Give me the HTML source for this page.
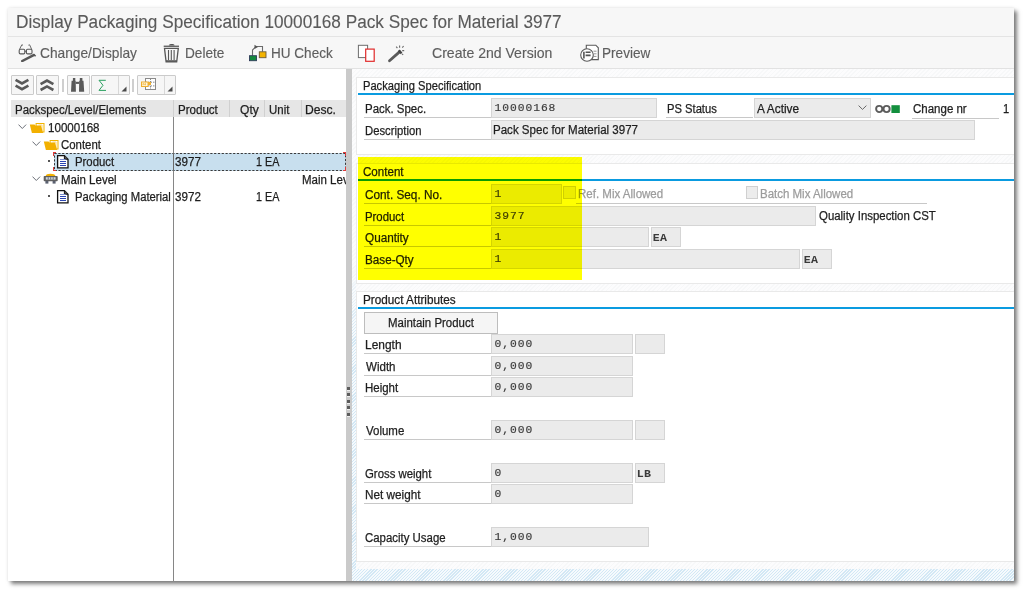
<!DOCTYPE html>
<html><head><meta charset="utf-8">
<style>
*{box-sizing:border-box}
html,body{margin:0;padding:0}
body{width:1023px;height:590px;background:#fff;position:relative;overflow:hidden;font-family:"Liberation Sans",sans-serif;color:#222}
.a{position:absolute;white-space:nowrap}
.r{position:absolute}
.hatch{position:absolute;background-color:#eef6fb;background-image:repeating-linear-gradient(135deg,#d3e8f5 0 1px,#f6fafd 1px 2.2px)}
.fhatch{position:absolute;background-color:#fbfbfc;background-image:repeating-linear-gradient(135deg,#f7f8f9 0 1.2px,#fcfcfd 1.2px 3px)}
</style></head><body>

<div class="r" style="left:8px;top:8px;width:1006px;height:573px;background:#fff;box-shadow:3px 3px 4px 0px rgba(0,0,0,0.5),0 0 3px rgba(0,0,0,0.10)"></div>
<div class="r" style="left:8px;top:8px;width:1006px;height:28px;background:#f7f7f7;"></div>
<div class="r" style="left:8px;top:36px;width:1006px;height:1px;background:#e4e4e4;"></div>
<div class="a" style="left:15.62px;top:10px;font-size:18px;line-height:25px;color:#5a5a5a;font-family:'Liberation Sans',sans-serif;font-weight:400;transform:scaleX(0.9550);transform-origin:0 0;-webkit-text-stroke:0.12px #5a5a5a;">Display Packaging Specification 10000168 Pack Spec for Material 3977</div>
<div class="r" style="left:8px;top:37px;width:1006px;height:31px;background:#f7f7f7;"></div>
<div class="r" style="left:8px;top:68px;width:1006px;height:1px;background:#e2e2e2;"></div>
<div class="a" style="left:40.31px;top:43px;font-size:14.5px;line-height:20px;color:#5e5e5e;font-family:'Liberation Sans',sans-serif;font-weight:400;transform:scaleX(0.9474);transform-origin:0 0;-webkit-text-stroke:0.15px #5e5e5e;">Change/Display</div>
<div class="a" style="left:184.91px;top:43px;font-size:14.5px;line-height:20px;color:#5e5e5e;font-family:'Liberation Sans',sans-serif;font-weight:400;transform:scaleX(0.9403);transform-origin:0 0;-webkit-text-stroke:0.15px #5e5e5e;">Delete</div>
<div class="a" style="left:270.92px;top:43px;font-size:14.5px;line-height:20px;color:#5e5e5e;font-family:'Liberation Sans',sans-serif;font-weight:400;transform:scaleX(0.9339);transform-origin:0 0;-webkit-text-stroke:0.15px #5e5e5e;">HU Check</div>
<div class="a" style="left:432.3px;top:43px;font-size:14.5px;line-height:20px;color:#5e5e5e;font-family:'Liberation Sans',sans-serif;font-weight:400;transform:scaleX(0.9702);transform-origin:0 0;-webkit-text-stroke:0.15px #5e5e5e;">Create 2nd Version</div>
<div class="a" style="left:601.61px;top:43px;font-size:14.5px;line-height:20px;color:#5e5e5e;font-family:'Liberation Sans',sans-serif;font-weight:400;transform:scaleX(0.9374);transform-origin:0 0;-webkit-text-stroke:0.15px #5e5e5e;">Preview</div>
<svg class="a" style="left:16px;top:42px" width="22" height="20" viewBox="0 0 22 20"><rect x="3.2" y="7.3" width="5.6" height="4.6" rx="1.2" fill="none" stroke="#575757" stroke-width="1.1"/><rect x="10.4" y="7.3" width="5.6" height="4.6" rx="1.2" fill="none" stroke="#575757" stroke-width="1.1"/><path d="M8.8 9.3 h1.6 M3.6 7.2 L5.8 2.8 L7 3.2 M15.6 7.2 L13.6 2.8 L12.4 3.2" fill="none" stroke="#575757" stroke-width="0.9"/><path d="M6.2 19 L17.6 13.1" stroke="#575757" stroke-width="2.5" stroke-linecap="round"/><path d="M17.6 12.2 L19.6 14.2" stroke="#575757" stroke-width="1.6"/></svg>
<svg class="a" style="left:162px;top:42px" width="19" height="21" viewBox="0 0 19 21"><path d="M6.8 3.6 Q6.8 2 8.8 2 h2 Q12.6 2 12.6 3.6" fill="#575757"/><rect x="1.7" y="3.6" width="15.3" height="1.3" fill="#575757"/><path d="M2.5 6.3 h13.8 l-1.6 13.5 h-10.6 Z" fill="none" stroke="#575757" stroke-width="1.3"/><path d="M6.5 8 v10 M9.3 8 v10 M12.1 8 v10" stroke="#575757" stroke-width="1.1"/><rect x="4" y="18.2" width="10.8" height="1.7" fill="#575757"/></svg>
<svg class="a" style="left:248px;top:44px" width="20" height="18" viewBox="0 0 20 18"><path d="M4.5 11.7 V6 L8 2.5 H14.5 V7.8" fill="none" stroke="#6b6b6b" stroke-width="1.1"/><path d="M6.5 0.8 L10 3 L6.5 5 Z" fill="#555"/><rect x="1.5" y="11.7" width="7" height="5" fill="#14893d" stroke="#2f3a5a" stroke-width="0.9"/><rect x="11.3" y="7.8" width="6.7" height="5.9" fill="#f3b300" stroke="#6a5a3a" stroke-width="0.9"/></svg>
<svg class="a" style="left:356px;top:44px" width="20" height="19" viewBox="0 0 20 19"><rect x="2.4" y="1.3" width="9.2" height="12.3" fill="#fff" stroke="#6d6d6d" stroke-width="1"/><rect x="9.7" y="5.1" width="8.5" height="12.2" fill="#fff" stroke="#e02a2a" stroke-width="1.2"/></svg>
<svg class="a" style="left:386px;top:43px" width="21" height="20" viewBox="0 0 21 20"><path d="M3.5 17.8 L13.8 8.6" stroke="#5a5a5a" stroke-width="2.8" stroke-linecap="round"/><path d="M12.6 7.4 L15.6 10.4" stroke="#444" stroke-width="2.2"/><path d="M13.6 2.6 v2.2 M10.2 3.6 l1.2 1.6 M17.6 3 l-1.3 1.6 M18.2 7.6 h-2 M17.2 11.8 l-1.2 -1" stroke="#6a6a6a" stroke-width="1.1"/></svg>
<svg class="a" style="left:578px;top:43px" width="22" height="20" viewBox="0 0 22 20"><path d="M8.3 2.2 h9.5 l2.5 2.6 v11.8 h-12 Z" fill="#fff" stroke="#5a5a5a" stroke-width="1.1"/><path d="M15.5 8.2 h3 M15.5 10.8 h3 M15.5 13.4 h3" stroke="#8a8a8a" stroke-width="0.9"/><circle cx="9" cy="12" r="6.3" fill="#fff" stroke="#5a5a5a" stroke-width="1.1"/><path d="M5.9 8.7 v6.8 M7.6 9.3 h5 M7.6 12.4 h5" stroke="#555" stroke-width="1.6"/></svg>
<div class="r" style="left:8px;top:69px;width:338px;height:512px;background:#fff;"></div>
<div class="r" style="left:11px;top:75px;width:23px;height:20px;background:#f6f6f6;border:1px solid #cbcbcb;border-radius:1px"></div>
<div class="r" style="left:36px;top:75px;width:23px;height:20px;background:#f6f6f6;border:1px solid #cbcbcb;border-radius:1px"></div>
<div class="r" style="left:62px;top:79px;width:2px;height:13px;background:#cfcfcf;"></div>
<div class="r" style="left:67px;top:75px;width:23px;height:20px;background:#f6f6f6;border:1px solid #cbcbcb;border-radius:1px"></div>
<div class="r" style="left:91px;top:75px;width:39px;height:20px;background:#f6f6f6;border:1px solid #cbcbcb;border-radius:1px"></div>
<div class="r" style="left:118px;top:76px;width:1px;height:18px;background:#d8d8d8;"></div>
<svg class="a" style="left:121px;top:86px" width="6" height="6" viewBox="0 0 6 6"><path d="M5.5 0.5 L5.5 5.5 L0.5 5.5 Z" fill="#4a4a4a"/></svg>
<div class="r" style="left:132px;top:79px;width:2px;height:13px;background:#cfcfcf;"></div>
<div class="r" style="left:137px;top:75px;width:39px;height:20px;background:#f6f6f6;border:1px solid #cbcbcb;border-radius:1px"></div>
<div class="r" style="left:164px;top:76px;width:1px;height:18px;background:#d8d8d8;"></div>
<svg class="a" style="left:167px;top:86px" width="6" height="6" viewBox="0 0 6 6"><path d="M5.5 0.5 L5.5 5.5 L0.5 5.5 Z" fill="#4a4a4a"/></svg>
<svg class="a" style="left:14px;top:78px" width="16" height="14" viewBox="0 0 16 14"><path d="M1.6 1.8 L8 5.4 L14.4 1.8" fill="none" stroke="#5a5a5a" stroke-width="2.6"/><path d="M1.6 7.6 L8 11.2 L14.4 7.6" fill="none" stroke="#5a5a5a" stroke-width="2.6"/></svg>
<svg class="a" style="left:39px;top:78px" width="16" height="14" viewBox="0 0 16 14"><path d="M1.6 6.2 L8 2.6 L14.4 6.2" fill="none" stroke="#5a5a5a" stroke-width="2.6"/><path d="M1.6 12 L8 8.4 L14.4 12" fill="none" stroke="#5a5a5a" stroke-width="2.6"/></svg>
<svg class="a" style="left:66px;top:74px" width="24" height="22" viewBox="0 0 24 22"><path d="M6.9 3.9 H9.3 V6.7 H9.7 L9.9 17.7 H5 L5.6 6.7 H6.9 Z M13.8 3.9 H16.4 V6.7 H17.5 L18.2 17.7 H13 L13.2 6.7 H13.8 Z" fill="#595959"/><rect x="9.6" y="7.8" width="3.8" height="2.1" fill="#595959"/></svg>
<svg class="a" style="left:97px;top:79px" width="10" height="13" viewBox="0 0 10 13"><path d="M8.8 1.3 H2 L6 6.3 L2 11.4 H9" fill="none" stroke="#2aa060" stroke-width="1.0"/></svg>
<svg class="a" style="left:140px;top:77px" width="20" height="15" viewBox="0 0 20 15"><rect x="5.5" y="1.5" width="10" height="11" fill="#fff" stroke="#8a8a8a" stroke-width="1"/><path d="M5.5 5.2 H15.5 M5.5 8.9 H15.5 M10.5 1.5 V12.5" stroke="#8a8a8a" stroke-width="1" stroke-dasharray="1.5 1"/><rect x="1.5" y="5" width="6.5" height="4.5" fill="#fff7e0" stroke="#f0b030" stroke-width="1"/><rect x="8" y="5" width="3" height="3" fill="#f0b030"/><path d="M3 8.3 V6.4 L4.2 7.5 L5.4 6.4 V8.3" fill="none" stroke="#f0b030" stroke-width="0.8"/></svg>
<div class="r" style="left:11px;top:100px;width:335px;height:17px;background:#e6e6e6;"></div>
<div class="r" style="left:173px;top:100px;width:1px;height:17px;background:#d0d0d0;"></div>
<div class="r" style="left:229px;top:100px;width:1px;height:17px;background:#d0d0d0;"></div>
<div class="r" style="left:264px;top:100px;width:1px;height:17px;background:#d0d0d0;"></div>
<div class="r" style="left:301px;top:100px;width:1px;height:17px;background:#d0d0d0;"></div>
<div class="r" style="left:173px;top:117px;width:1px;height:464px;background:#868686;"></div>
<div class="a" style="left:14.98px;top:102px;font-size:12px;line-height:17px;color:#1e1e1e;font-family:'Liberation Sans',sans-serif;font-weight:400;transform:scaleX(0.9550);transform-origin:0 0;-webkit-text-stroke:0.25px #1e1e1e;">Packspec/Level/Elements</div>
<div class="a" style="left:177.88px;top:102px;font-size:12px;line-height:17px;color:#1e1e1e;font-family:'Liberation Sans',sans-serif;font-weight:400;transform:scaleX(0.9623);transform-origin:0 0;-webkit-text-stroke:0.25px #1e1e1e;">Product</div>
<div class="a" style="left:240.36px;top:102px;font-size:12px;line-height:17px;color:#1e1e1e;font-family:'Liberation Sans',sans-serif;font-weight:400;transform:scaleX(1.0044);transform-origin:0 0;-webkit-text-stroke:0.25px #1e1e1e;">Qty</div>
<div class="a" style="left:269.44px;top:102px;font-size:12px;line-height:17px;color:#1e1e1e;font-family:'Liberation Sans',sans-serif;font-weight:400;transform:scaleX(0.9538);transform-origin:0 0;-webkit-text-stroke:0.25px #1e1e1e;">Unit</div>
<div class="a" style="left:305.43px;top:102px;font-size:12px;line-height:17px;color:#1e1e1e;font-family:'Liberation Sans',sans-serif;font-weight:400;transform:scaleX(1.0098);transform-origin:0 0;-webkit-text-stroke:0.25px #1e1e1e;">Desc.</div>
<div class="r" style="left:54px;top:153px;width:292px;height:18px;background:#c8dfee;"></div>
<svg class="a" style="left:54px;top:153px" width="292" height="18" viewBox="0 0 292 18"><rect x="0.5" y="0.5" width="291" height="17" fill="none" stroke="#3a3a3a" stroke-width="1" stroke-dasharray="2.2 1.6"/></svg>
<div class="r" style="left:53px;top:152px;width:1px;height:4px;background:#e23a3a;"></div>
<div class="r" style="left:53px;top:152px;width:3px;height:1px;background:#e23a3a;"></div>
<div class="r" style="left:53px;top:167px;width:1px;height:4px;background:#e23a3a;"></div>
<div class="r" style="left:53px;top:170px;width:3px;height:1px;background:#e23a3a;"></div>
<div class="r" style="left:345px;top:152px;width:1px;height:4px;background:#e23a3a;"></div>
<div class="r" style="left:343px;top:152px;width:3px;height:1px;background:#e23a3a;"></div>
<div class="r" style="left:345px;top:167px;width:1px;height:4px;background:#e23a3a;"></div>
<div class="r" style="left:343px;top:170px;width:3px;height:1px;background:#e23a3a;"></div>
<div class="r" style="left:173px;top:153px;width:1px;height:18px;background:#6a6a6a;"></div>
<svg class="a" style="left:18px;top:124px" width="9" height="6" viewBox="0 0 9 6"><path d="M0.5 0.6 L4.3 4.5 L8.1 0.6" fill="none" stroke="#6c7078" stroke-width="1"/></svg>
<svg class="a" style="left:29px;top:122px" width="16" height="13" viewBox="0 0 16 13"><rect x="7.1" y="1.5" width="7.9" height="8.5" fill="#fffdf5" stroke="#f2b400" stroke-width="1"/><path d="M9.5 3 h3.5 v6" fill="none" stroke="#f6d27a" stroke-width="0.8"/><path d="M0.8 2.6 H5.6 L6.3 3.4 H12 L14.1 11.1 H2.9 Z" fill="#f2b000"/></svg>
<div class="a" style="left:47.93px;top:120px;font-size:12px;line-height:17px;color:#1e1e1e;font-family:'Liberation Sans',sans-serif;font-weight:400;transform:scaleX(0.9650);transform-origin:0 0;-webkit-text-stroke:0.25px #1e1e1e;">10000168</div>
<svg class="a" style="left:32px;top:141px" width="9" height="6" viewBox="0 0 9 6"><path d="M0.5 0.6 L4.3 4.5 L8.1 0.6" fill="none" stroke="#6c7078" stroke-width="1"/></svg>
<svg class="a" style="left:43px;top:139px" width="16" height="13" viewBox="0 0 16 13"><rect x="7.1" y="1.5" width="7.9" height="8.5" fill="#fffdf5" stroke="#f2b400" stroke-width="1"/><path d="M9.5 3 h3.5 v6" fill="none" stroke="#f6d27a" stroke-width="0.8"/><path d="M0.8 2.6 H5.6 L6.3 3.4 H12 L14.1 11.1 H2.9 Z" fill="#f2b000"/></svg>
<div class="a" style="left:61.43px;top:137px;font-size:12px;line-height:17px;color:#1e1e1e;font-family:'Liberation Sans',sans-serif;font-weight:400;transform:scaleX(0.9507);transform-origin:0 0;-webkit-text-stroke:0.25px #1e1e1e;">Content</div>
<div class="r" style="left:48px;top:160px;width:2px;height:2px;background:#555;box-shadow:0 0 0.6px #888"></div>
<svg class="a" style="left:56px;top:154px" width="14" height="15" viewBox="0 0 14 15"><path d="M1.6 1.6 H8.4 L12 5.2 V13.9 H1.6 Z" fill="#fff" stroke="#111" stroke-width="1.3"/><path d="M8.4 1.6 V5.2 H12" fill="#555" stroke="#111" stroke-width="1"/><path d="M4 5.5 H9.5" stroke="#7c8fd0" stroke-width="1"/><path d="M4 7.5 H10 M4 9.5 H10 M4 11.5 H10" stroke="#2b45b0" stroke-width="1"/></svg>
<div class="a" style="left:74.89px;top:154px;font-size:12px;line-height:17px;color:#1e1e1e;font-family:'Liberation Sans',sans-serif;font-weight:400;transform:scaleX(0.9474);transform-origin:0 0;-webkit-text-stroke:0.25px #1e1e1e;">Product</div>
<div class="a" style="left:175.23px;top:154px;font-size:12px;line-height:17px;color:#1e1e1e;font-family:'Liberation Sans',sans-serif;font-weight:400;transform:scaleX(0.9719);transform-origin:0 0;-webkit-text-stroke:0.25px #1e1e1e;">3977</div>
<div class="a" style="left:256.19px;top:154px;font-size:12px;line-height:17px;color:#1e1e1e;font-family:'Liberation Sans',sans-serif;font-weight:400;transform:scaleX(0.8971);transform-origin:0 0;-webkit-text-stroke:0.25px #1e1e1e;">1 EA</div>
<svg class="a" style="left:32px;top:176px" width="9" height="6" viewBox="0 0 9 6"><path d="M0.5 0.6 L4.3 4.5 L8.1 0.6" fill="none" stroke="#6c7078" stroke-width="1"/></svg>
<svg class="a" style="left:43px;top:173px" width="16" height="12" viewBox="0 0 16 12"><path d="M2.5 3.2 Q3.2 0.8 7.5 0.8 Q11.8 0.8 12.5 3.2 Z" fill="#f2b000"/><rect x="0.7" y="3" width="14" height="5.2" rx="0.8" fill="#5f5f5f"/><rect x="2.8" y="4.2" width="9.8" height="2.4" fill="#cfd8e0"/><path d="M5.2 4.2 v2.4 M7.7 4.2 v2.4 M10.2 4.2 v2.4" stroke="#6a6a6a" stroke-width="0.9"/><rect x="2.4" y="8" width="3" height="2.6" fill="#5a6070"/><rect x="9.6" y="8" width="3" height="2.6" fill="#5a6070"/></svg>
<div class="a" style="left:61.08px;top:172px;font-size:12px;line-height:17px;color:#1e1e1e;font-family:'Liberation Sans',sans-serif;font-weight:400;transform:scaleX(0.9577);transform-origin:0 0;-webkit-text-stroke:0.25px #1e1e1e;">Main Level</div>
<div class="r" style="left:300px;top:170px;width:46px;height:18px;overflow:hidden">
<div class="a" style="left:2.08px;top:2px;font-size:12px;line-height:17px;color:#1e1e1e;font-family:'Liberation Sans',sans-serif;font-weight:400;transform:scaleX(0.9577);transform-origin:0 0;-webkit-text-stroke:0.25px #1e1e1e;">Main Level</div>
</div>
<div class="r" style="left:48px;top:195px;width:2px;height:2px;background:#555;box-shadow:0 0 0.6px #888"></div>
<svg class="a" style="left:56px;top:189px" width="14" height="15" viewBox="0 0 14 15"><path d="M1.6 1.6 H8.4 L12 5.2 V13.9 H1.6 Z" fill="#fff" stroke="#111" stroke-width="1.3"/><path d="M8.4 1.6 V5.2 H12" fill="#555" stroke="#111" stroke-width="1"/><path d="M4 5.5 H9.5" stroke="#7c8fd0" stroke-width="1"/><path d="M4 7.5 H10 M4 9.5 H10 M4 11.5 H10" stroke="#2b45b0" stroke-width="1"/></svg>
<div class="a" style="left:74.9px;top:189px;font-size:12px;line-height:17px;color:#1e1e1e;font-family:'Liberation Sans',sans-serif;font-weight:400;transform:scaleX(0.9390);transform-origin:0 0;-webkit-text-stroke:0.25px #1e1e1e;">Packaging Material</div>
<div class="a" style="left:175.23px;top:189px;font-size:12px;line-height:17px;color:#1e1e1e;font-family:'Liberation Sans',sans-serif;font-weight:400;transform:scaleX(0.9719);transform-origin:0 0;-webkit-text-stroke:0.25px #1e1e1e;">3972</div>
<div class="a" style="left:256.19px;top:189px;font-size:12px;line-height:17px;color:#1e1e1e;font-family:'Liberation Sans',sans-serif;font-weight:400;transform:scaleX(0.8971);transform-origin:0 0;-webkit-text-stroke:0.25px #1e1e1e;">1 EA</div>
<div class="fhatch" style="left:352px;top:69px;width:662px;height:512px;"></div>
<div class="r" style="left:346px;top:69px;width:6px;height:512px;background:#cacaca;"></div>
<div class="hatch" style="left:352px;top:69px;width:4px;height:512px;-webkit-mask-image:linear-gradient(to bottom,transparent 0,transparent 190px,#000 270px);mask-image:linear-gradient(to bottom,transparent 0,transparent 190px,#000 270px);"></div>
<div class="hatch" style="left:352px;top:569px;width:662px;height:12px;"></div>
<div class="r" style="left:0;top:0;width:1014px;height:581px;overflow:hidden">
<div class="r" style="left:356px;top:77px;width:670px;height:78px;background:#fff;border:1px solid #e9e9e9;"></div>
<div class="a" style="left:362.91px;top:78px;font-size:12px;line-height:17px;color:#1e1e1e;font-family:'Liberation Sans',sans-serif;font-weight:400;transform:scaleX(0.9280);transform-origin:0 0;-webkit-text-stroke:0.25px #1e1e1e;">Packaging Specification</div>
<div class="r" style="left:358px;top:93px;width:656px;height:2px;background:#0a9be0;"></div>
<div class="a" style="left:364.78px;top:101px;font-size:12px;line-height:17px;color:#1e1e1e;font-family:'Liberation Sans',sans-serif;font-weight:400;transform:scaleX(0.9551);transform-origin:0 0;-webkit-text-stroke:0.25px #1e1e1e;">Pack. Spec.</div>
<div class="r" style="left:364px;top:117px;width:127px;height:1px;background:#c8c8c8;"></div>
<div class="r" style="left:491px;top:98px;width:166px;height:20px;background:#ebebeb;border:1px solid #d5d5d5;"></div>
<div class="a" style="left:494.5px;top:100px;font-size:11.3px;line-height:16px;color:#3c3c3c;font-family:'Liberation Mono',monospace;font-weight:400;-webkit-text-stroke:0.18px #3c3c3c;letter-spacing:0.95px">10000168</div>
<div class="a" style="left:666.6px;top:101px;font-size:12px;line-height:17px;color:#1e1e1e;font-family:'Liberation Sans',sans-serif;font-weight:400;transform:scaleX(0.9334);transform-origin:0 0;-webkit-text-stroke:0.25px #1e1e1e;">PS Status</div>
<div class="r" style="left:665.5px;top:117px;width:87.5px;height:1px;background:#c8c8c8;"></div>
<div class="r" style="left:753.5px;top:98px;width:117px;height:20px;background:#ebebeb;border:1px solid #d5d5d5;"></div>
<div class="a" style="left:757.0px;top:101px;font-size:12px;line-height:17px;color:#1e1e1e;font-family:'Liberation Sans',sans-serif;font-weight:400;transform:scaleX(0.9853);transform-origin:0 0;-webkit-text-stroke:0.25px #1e1e1e;">A Active</div>
<svg class="a" style="left:858px;top:105px" width="9" height="5" viewBox="0 0 9 5"><path d="M0.6 0.6 L4.5 4.4 L8.4 0.6" fill="none" stroke="#666" stroke-width="1"/></svg>
<svg class="a" style="left:875px;top:104px" width="26" height="10" viewBox="0 0 26 10"><circle cx="4.2" cy="5" r="3.1" fill="none" stroke="#5c5c5c" stroke-width="1.9"/><circle cx="11.6" cy="5" r="3.1" fill="none" stroke="#5c5c5c" stroke-width="1.9"/><rect x="16.4" y="1.2" width="8.4" height="7.8" fill="#138f3e"/></svg>
<div class="a" style="left:912.72px;top:101px;font-size:12px;line-height:17px;color:#1e1e1e;font-family:'Liberation Sans',sans-serif;font-weight:400;transform:scaleX(0.9583);transform-origin:0 0;-webkit-text-stroke:0.25px #1e1e1e;">Change nr</div>
<div class="r" style="left:912px;top:118px;width:87px;height:1px;background:#c8c8c8;"></div>
<div class="a" style="left:1002.5px;top:101px;font-size:12px;line-height:17px;color:#1e1e1e;font-family:'Liberation Sans',sans-serif;font-weight:400;transform:scaleX(0.9300);transform-origin:0 0;-webkit-text-stroke:0.25px #1e1e1e;">1</div>
<div class="a" style="left:364.8px;top:123px;font-size:12px;line-height:17px;color:#1e1e1e;font-family:'Liberation Sans',sans-serif;font-weight:400;transform:scaleX(0.9406);transform-origin:0 0;-webkit-text-stroke:0.25px #1e1e1e;">Description</div>
<div class="r" style="left:364px;top:139px;width:127px;height:1px;background:#c8c8c8;"></div>
<div class="r" style="left:491px;top:120px;width:484px;height:20px;background:#ebebeb;border:1px solid #d5d5d5;"></div>
<div class="a" style="left:493.48px;top:122px;font-size:12px;line-height:17px;color:#1e1e1e;font-family:'Liberation Sans',sans-serif;font-weight:400;transform:scaleX(0.9621);transform-origin:0 0;-webkit-text-stroke:0.25px #1e1e1e;">Pack Spec for Material 3977</div>
<div class="r" style="left:356px;top:163px;width:670px;height:121px;background:#fff;border:1px solid #e9e9e9;"></div>
<div class="a" style="left:363.22px;top:164px;font-size:12px;line-height:17px;color:#1e1e1e;font-family:'Liberation Sans',sans-serif;font-weight:400;transform:scaleX(0.9652);transform-origin:0 0;-webkit-text-stroke:0.25px #1e1e1e;">Content</div>
<div class="r" style="left:358px;top:179px;width:656px;height:2px;background:#0a9be0;"></div>
<div class="a" style="left:365.11px;top:187px;font-size:12px;line-height:17px;color:#1e1e1e;font-family:'Liberation Sans',sans-serif;font-weight:400;transform:scaleX(0.9821);transform-origin:0 0;-webkit-text-stroke:0.25px #1e1e1e;">Cont. Seq. No.</div>
<div class="r" style="left:364px;top:203px;width:127px;height:1px;background:#c8c8c8;"></div>
<div class="r" style="left:491px;top:184px;width:71px;height:20px;background:#ebebeb;border:1px solid #d5d5d5;"></div>
<div class="a" style="left:494.5px;top:186px;font-size:11.3px;line-height:16px;color:#3c3c3c;font-family:'Liberation Mono',monospace;font-weight:400;-webkit-text-stroke:0.18px #3c3c3c;letter-spacing:0.95px">1</div>
<div class="r" style="left:563px;top:186px;width:13px;height:13px;background:#ececec;border:1px solid #d0d0d0;"></div>
<div class="a" style="left:577.88px;top:186px;font-size:12px;line-height:17px;color:#9c9c9c;font-family:'Liberation Sans',sans-serif;font-weight:400;transform:scaleX(0.9604);transform-origin:0 0;-webkit-text-stroke:0.25px #9c9c9c;">Ref. Mix Allowed</div>
<div class="r" style="left:576px;top:203px;width:351px;height:1px;background:#c8c8c8;"></div>
<div class="r" style="left:746px;top:186px;width:12px;height:13px;background:#ececec;border:1px solid #d0d0d0;"></div>
<div class="a" style="left:760.08px;top:186px;font-size:12px;line-height:17px;color:#9c9c9c;font-family:'Liberation Sans',sans-serif;font-weight:400;transform:scaleX(0.9567);transform-origin:0 0;-webkit-text-stroke:0.25px #9c9c9c;">Batch Mix Allowed</div>
<div class="a" style="left:364.79px;top:209px;font-size:12px;line-height:17px;color:#1e1e1e;font-family:'Liberation Sans',sans-serif;font-weight:400;transform:scaleX(0.9474);transform-origin:0 0;-webkit-text-stroke:0.25px #1e1e1e;">Product</div>
<div class="r" style="left:364px;top:225px;width:127px;height:1px;background:#c8c8c8;"></div>
<div class="r" style="left:491px;top:206px;width:325px;height:20px;background:#ebebeb;border:1px solid #d5d5d5;"></div>
<div class="a" style="left:494.5px;top:208px;font-size:11.3px;line-height:16px;color:#3c3c3c;font-family:'Liberation Mono',monospace;font-weight:400;-webkit-text-stroke:0.18px #3c3c3c;letter-spacing:0.95px">3977</div>
<div class="a" style="left:819.39px;top:208px;font-size:12px;line-height:17px;color:#1e1e1e;font-family:'Liberation Sans',sans-serif;font-weight:400;transform:scaleX(0.9514);transform-origin:0 0;-webkit-text-stroke:0.25px #1e1e1e;">Quality Inspection CST</div>
<div class="a" style="left:365.17px;top:230px;font-size:12px;line-height:17px;color:#1e1e1e;font-family:'Liberation Sans',sans-serif;font-weight:400;transform:scaleX(0.9783);transform-origin:0 0;-webkit-text-stroke:0.25px #1e1e1e;">Quantity</div>
<div class="r" style="left:364px;top:246px;width:127px;height:1px;background:#c8c8c8;"></div>
<div class="r" style="left:491px;top:227px;width:158px;height:20px;background:#ebebeb;border:1px solid #d5d5d5;"></div>
<div class="a" style="left:494.5px;top:229px;font-size:11.3px;line-height:16px;color:#3c3c3c;font-family:'Liberation Mono',monospace;font-weight:400;-webkit-text-stroke:0.18px #3c3c3c;letter-spacing:0.95px">1</div>
<div class="r" style="left:650.5px;top:227px;width:30px;height:20px;background:#ebebeb;border:1px solid #d5d5d5;"></div>
<div class="a" style="left:652.8px;top:230px;font-size:11.6px;line-height:16px;color:#3a3a3a;font-family:'Liberation Mono',monospace;font-weight:700;letter-spacing:0.3px">EA</div>
<div class="a" style="left:364.77px;top:252px;font-size:12px;line-height:17px;color:#1e1e1e;font-family:'Liberation Sans',sans-serif;font-weight:400;transform:scaleX(0.9739);transform-origin:0 0;-webkit-text-stroke:0.25px #1e1e1e;">Base-Qty</div>
<div class="r" style="left:364px;top:268px;width:127px;height:1px;background:#c8c8c8;"></div>
<div class="r" style="left:491px;top:249px;width:309px;height:20px;background:#ebebeb;border:1px solid #d5d5d5;"></div>
<div class="a" style="left:494.5px;top:251px;font-size:11.3px;line-height:16px;color:#3c3c3c;font-family:'Liberation Mono',monospace;font-weight:400;-webkit-text-stroke:0.18px #3c3c3c;letter-spacing:0.95px">1</div>
<div class="r" style="left:801.5px;top:249px;width:30px;height:20px;background:#ebebeb;border:1px solid #d5d5d5;"></div>
<div class="a" style="left:803.8px;top:252px;font-size:11.6px;line-height:16px;color:#3a3a3a;font-family:'Liberation Mono',monospace;font-weight:700;letter-spacing:0.3px">EA</div>
<div class="r" style="left:356px;top:291px;width:670px;height:271px;background:#fff;border:1px solid #e9e9e9;"></div>
<div class="a" style="left:362.86px;top:292px;font-size:12px;line-height:17px;color:#1e1e1e;font-family:'Liberation Sans',sans-serif;font-weight:400;transform:scaleX(0.9779);transform-origin:0 0;-webkit-text-stroke:0.25px #1e1e1e;">Product Attributes</div>
<div class="r" style="left:358px;top:307px;width:656px;height:2px;background:#0a9be0;"></div>
<div class="r" style="left:364px;top:312px;width:134px;height:22px;background:#f5f5f5;border:1px solid #bdbdbd;"></div>
<div class="a" style="left:387.89px;top:315px;font-size:12px;line-height:17px;color:#1e1e1e;font-family:'Liberation Sans',sans-serif;font-weight:400;transform:scaleX(0.9530);transform-origin:0 0;-webkit-text-stroke:0.25px #1e1e1e;">Maintain Product</div>
<div class="a" style="left:364.74px;top:337px;font-size:12px;line-height:17px;color:#1e1e1e;font-family:'Liberation Sans',sans-serif;font-weight:400;transform:scaleX(0.9949);transform-origin:0 0;-webkit-text-stroke:0.25px #1e1e1e;">Length</div>
<div class="r" style="left:364px;top:353px;width:127px;height:1px;background:#c8c8c8;"></div>
<div class="r" style="left:491px;top:334px;width:142px;height:20px;background:#ebebeb;border:1px solid #d5d5d5;"></div>
<div class="a" style="left:494.5px;top:336px;font-size:11.3px;line-height:16px;color:#3c3c3c;font-family:'Liberation Mono',monospace;font-weight:400;-webkit-text-stroke:0.18px #3c3c3c;letter-spacing:0.95px">0,000</div>
<div class="r" style="left:634.5px;top:334px;width:30px;height:20px;background:#ebebeb;border:1px solid #d5d5d5;"></div>
<div class="a" style="left:365.64px;top:359px;font-size:12px;line-height:17px;color:#1e1e1e;font-family:'Liberation Sans',sans-serif;font-weight:400;transform:scaleX(0.9624);transform-origin:0 0;-webkit-text-stroke:0.25px #1e1e1e;">Width</div>
<div class="r" style="left:364px;top:375px;width:127px;height:1px;background:#c8c8c8;"></div>
<div class="r" style="left:491px;top:356px;width:142px;height:20px;background:#ebebeb;border:1px solid #d5d5d5;"></div>
<div class="a" style="left:494.5px;top:358px;font-size:11.3px;line-height:16px;color:#3c3c3c;font-family:'Liberation Mono',monospace;font-weight:400;-webkit-text-stroke:0.18px #3c3c3c;letter-spacing:0.95px">0,000</div>
<div class="a" style="left:364.78px;top:380px;font-size:12px;line-height:17px;color:#1e1e1e;font-family:'Liberation Sans',sans-serif;font-weight:400;transform:scaleX(0.9566);transform-origin:0 0;-webkit-text-stroke:0.25px #1e1e1e;">Height</div>
<div class="r" style="left:364px;top:396px;width:127px;height:1px;background:#c8c8c8;"></div>
<div class="r" style="left:491px;top:377px;width:142px;height:20px;background:#ebebeb;border:1px solid #d5d5d5;"></div>
<div class="a" style="left:494.5px;top:379px;font-size:11.3px;line-height:16px;color:#3c3c3c;font-family:'Liberation Mono',monospace;font-weight:400;-webkit-text-stroke:0.18px #3c3c3c;letter-spacing:0.95px">0,000</div>
<div class="a" style="left:365.64px;top:423px;font-size:12px;line-height:17px;color:#1e1e1e;font-family:'Liberation Sans',sans-serif;font-weight:400;transform:scaleX(0.9564);transform-origin:0 0;-webkit-text-stroke:0.25px #1e1e1e;">Volume</div>
<div class="r" style="left:364px;top:439px;width:127px;height:1px;background:#c8c8c8;"></div>
<div class="r" style="left:491px;top:420px;width:142px;height:20px;background:#ebebeb;border:1px solid #d5d5d5;"></div>
<div class="a" style="left:494.5px;top:422px;font-size:11.3px;line-height:16px;color:#3c3c3c;font-family:'Liberation Mono',monospace;font-weight:400;-webkit-text-stroke:0.18px #3c3c3c;letter-spacing:0.95px">0,000</div>
<div class="r" style="left:634.5px;top:420px;width:30px;height:20px;background:#ebebeb;border:1px solid #d5d5d5;"></div>
<div class="a" style="left:365.13px;top:466px;font-size:12px;line-height:17px;color:#1e1e1e;font-family:'Liberation Sans',sans-serif;font-weight:400;transform:scaleX(0.9472);transform-origin:0 0;-webkit-text-stroke:0.25px #1e1e1e;">Gross weight</div>
<div class="r" style="left:364px;top:482px;width:127px;height:1px;background:#c8c8c8;"></div>
<div class="r" style="left:491px;top:463px;width:142px;height:20px;background:#ebebeb;border:1px solid #d5d5d5;"></div>
<div class="a" style="left:494.5px;top:465px;font-size:11.3px;line-height:16px;color:#3c3c3c;font-family:'Liberation Mono',monospace;font-weight:400;-webkit-text-stroke:0.18px #3c3c3c;letter-spacing:0.95px">0</div>
<div class="r" style="left:634.5px;top:463px;width:30px;height:20px;background:#ebebeb;border:1px solid #d5d5d5;"></div>
<div class="a" style="left:636.8px;top:466px;font-size:11.6px;line-height:16px;color:#3a3a3a;font-family:'Liberation Mono',monospace;font-weight:700;letter-spacing:0.3px">LB</div>
<div class="a" style="left:364.76px;top:487px;font-size:12px;line-height:17px;color:#1e1e1e;font-family:'Liberation Sans',sans-serif;font-weight:400;transform:scaleX(0.9781);transform-origin:0 0;-webkit-text-stroke:0.25px #1e1e1e;">Net weight</div>
<div class="r" style="left:364px;top:503px;width:127px;height:1px;background:#c8c8c8;"></div>
<div class="r" style="left:491px;top:484px;width:142px;height:20px;background:#ebebeb;border:1px solid #d5d5d5;"></div>
<div class="a" style="left:494.5px;top:486px;font-size:11.3px;line-height:16px;color:#3c3c3c;font-family:'Liberation Mono',monospace;font-weight:400;-webkit-text-stroke:0.18px #3c3c3c;letter-spacing:0.95px">0</div>
<div class="a" style="left:365.13px;top:530px;font-size:12px;line-height:17px;color:#1e1e1e;font-family:'Liberation Sans',sans-serif;font-weight:400;transform:scaleX(0.9512);transform-origin:0 0;-webkit-text-stroke:0.25px #1e1e1e;">Capacity Usage</div>
<div class="r" style="left:364px;top:546px;width:127px;height:1px;background:#c8c8c8;"></div>
<div class="r" style="left:491px;top:527px;width:157.5px;height:20px;background:#ebebeb;border:1px solid #d5d5d5;"></div>
<div class="a" style="left:494.5px;top:529px;font-size:11.3px;line-height:16px;color:#3c3c3c;font-family:'Liberation Mono',monospace;font-weight:400;-webkit-text-stroke:0.18px #3c3c3c;letter-spacing:0.95px">1,000</div>
<div class="r" style="left:358px;top:156.5px;width:224px;height:123.5px;background:#ffff00;mix-blend-mode:multiply"></div>
</div>
<div class="r" style="left:347px;top:387px;width:3px;height:3px;background:#5c5c5c;box-shadow:0 1px 0 #f0f0f0"></div>
<div class="r" style="left:347px;top:393px;width:3px;height:3px;background:#5c5c5c;box-shadow:0 1px 0 #f0f0f0"></div>
<div class="r" style="left:347px;top:400px;width:3px;height:3px;background:#5c5c5c;box-shadow:0 1px 0 #f0f0f0"></div>
<div class="r" style="left:347px;top:406px;width:3px;height:3px;background:#5c5c5c;box-shadow:0 1px 0 #f0f0f0"></div>
<div class="r" style="left:347px;top:413px;width:3px;height:3px;background:#5c5c5c;box-shadow:0 1px 0 #f0f0f0"></div>
</body></html>
